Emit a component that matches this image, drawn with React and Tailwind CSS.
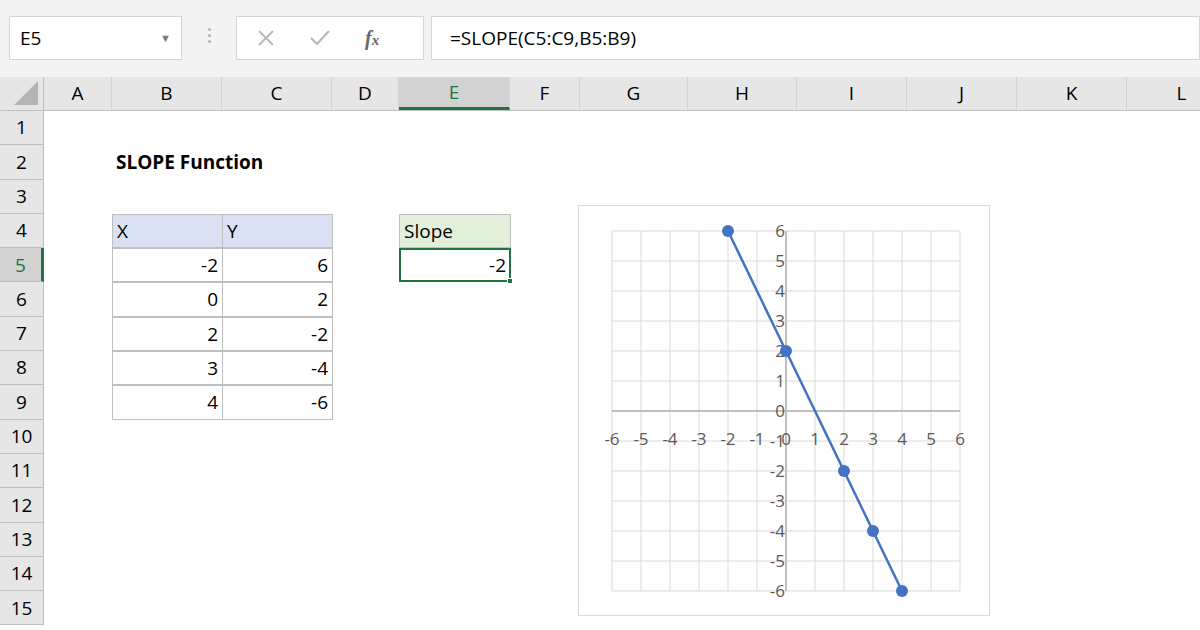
import React from "react";

const cols = [["A",68],["B",110],["C",110],["D",67],["E",111],["F",70],["G",108],["H",109],["I",110],["J",110],["K",110],["L",110]];
const F = { fontFamily: '"Segoe UI","Open Sans","Liberation Sans",sans-serif' };

function Chart() {
  const x0 = 33, y0 = 25, sx = 29, sy = 30;
  const X = v => x0 + (v + 6) * sx, Y = v => y0 + (6 - v) * sy;
  const pts = [[-2,6],[0,2],[2,-2],[3,-4],[4,-6]];
  const ticks = [-6,-5,-4,-3,-2,-1,0,1,2,3,4,5,6];
  return (
    <svg width="412" height="411" className="absolute left-[578px] top-[205px] bg-white border border-[#d9d9d9]">
      {ticks.map(t => <line key={"v"+t} x1={X(t)} x2={X(t)} y1={Y(6)} y2={Y(-6)} stroke="#d9d9d9" />)}
      {ticks.map(t => <line key={"h"+t} y1={Y(t)} y2={Y(t)} x1={X(-6)} x2={X(6)} stroke="#d9d9d9" />)}
      <line x1={X(0)} x2={X(0)} y1={Y(6)} y2={Y(-6)} stroke="#bfbfbf" strokeWidth="2" />
      <line y1={Y(0)} y2={Y(0)} x1={X(-6)} x2={X(6)} stroke="#bfbfbf" strokeWidth="2" />
      {ticks.map(t => <text key={"xt"+t} x={X(t)} y={Y(0)+34} textAnchor="middle" fontSize="17" fill="#595959" style={F}>{t}</text>)}
      {ticks.map(t => <text key={"yt"+t} x={X(0)-1} y={Y(t)+6} textAnchor="end" fontSize="17" fill="#595959" style={F}>{t}</text>)}
      <polyline points={pts.map(p=>X(p[0])+","+Y(p[1])).join(" ")} fill="none" stroke="#4472c4" strokeWidth="2.5" />
      {pts.map((p,i)=><circle key={i} cx={X(p[0])} cy={Y(p[1])} r="6" fill="#4472c4" />)}
    </svg>
  );
}

export default function App() {
  const data = [[-2,6],[0,2],[2,-2],[3,-4],[4,-6]];
  const cell = (r, c) => {
    let content = null, cls = "";
    if (r === 2 && c === "B") content = <span className="font-bold whitespace-nowrap">SLOPE Function</span>;
    if (r === 4 && (c === "B" || c === "C")) { content = c === "B" ? "X" : "Y"; cls = "bg-[#d9e1f2] border border-[#bfbfbf] justify-start pl-[4px]"; }
    if (r >= 5 && r <= 9 && (c === "B" || c === "C")) { content = data[r-5][c === "B" ? 0 : 1]; cls = "border border-[#bfbfbf] justify-end pr-[4px]"; }
    if (r === 4 && c === "E") { content = "Slope"; cls = "bg-[#e2efda] border border-[#bfbfbf] justify-start pl-[4px]"; }
    if (r === 5 && c === "E") { content = "-2"; cls = "border-2 border-[#217346] justify-end pr-[3px] relative"; }
    return (
      <div key={r+c} className={"flex items-center h-full -mr-px -mb-px " + (cls || (r===2&&c==="B" ? "pl-[4px]" : ""))}>
        {content}
        {r === 5 && c === "E" && <div className="absolute -right-[4px] -bottom-[4px] w-[6px] h-[6px] bg-[#217346] border border-white" />}
      </div>
    );
  };
  return (
    <div className="w-[1200px] h-[630px] overflow-hidden bg-white relative text-[19px] text-black" style={F}>
      <div className="h-[77px] bg-[#f3f3f3] flex items-start pt-[16px] pl-[9px]">
        <div className="w-[173px] h-[44px] bg-white border border-[#d4d4d4] flex items-center justify-between px-[10px]">
          <span>E5</span><span className="text-[#7a7a7a] text-[11px]">▼</span>
        </div>
        <div className="w-[54px] flex pt-[12px] flex-col items-center gap-[3px]">
          <span className="w-[3px] h-[3px] bg-[#b3b3b3] rounded-full" />
          <span className="w-[3px] h-[3px] bg-[#b3b3b3] rounded-full" />
          <span className="w-[3px] h-[3px] bg-[#b3b3b3] rounded-full" />
        </div>
        <div className="w-[188px] h-[44px] bg-white border border-[#d4d4d4] flex items-center px-[20px] gap-[34px]">
          <svg width="18" height="18" viewBox="0 0 18 18"><path d="M2 2L16 16M16 2L2 16" stroke="#b8b8b8" strokeWidth="2" /></svg>
          <svg width="22" height="18" viewBox="0 0 22 18"><path d="M2 9L8 15L20 2" stroke="#b8b8b8" strokeWidth="2.2" fill="none" /></svg>
          <span className="italic font-bold text-[#666] text-[20px]" style={{fontFamily:'"Liberation Serif",serif'}}>f<span className="text-[15px]">x</span></span>
        </div>
        <div className="ml-[7px] flex-1 h-[44px] bg-white border border-[#d4d4d4] flex items-center pl-[18px]">=SLOPE(C5:C9,B5:B9)</div>
      </div>
      <div className="flex h-[34px] bg-[#e6e6e6] border-b border-[#bfbfbf]">
        <div className="w-[44px] shrink-0 border-r border-[#bfbfbf] relative">
          <div className="absolute right-[5px] bottom-[5px] w-0 h-0 border-l-[24px] border-l-transparent border-b-[24px] border-b-[#b4b4b4]" />
        </div>
        {cols.map(([c,w]) => (
          <div key={c} style={{width:w}} className={"shrink-0 flex items-center justify-center border-r border-[#d4d4d4] " + (c==="E" ? "bg-[#d2d2d2] text-[#217346] border-b-[3px] border-b-[#217346]" : "")}>{c}</div>
        ))}
      </div>
      <div className="grid" style={{gridTemplateColumns:"44px " + cols.map(c=>c[1]+"px").join(" "), gridAutoRows:"34.3px"}}>
        {Array.from({length:15},(_,i)=>i+1).map(r => (
          <React.Fragment key={r}>
            <div className={"flex items-center justify-center border-r border-b border-[#bfbfbf] " + (r===5 ? "bg-[#d2d2d2] text-[#217346] border-r-[3px] border-r-[#217346]" : "bg-[#e6e6e6]")}>{r}</div>
            {cols.map(([c]) => cell(r, c))}
          </React.Fragment>
        ))}
      </div>
      <Chart />
    </div>
  );
}
